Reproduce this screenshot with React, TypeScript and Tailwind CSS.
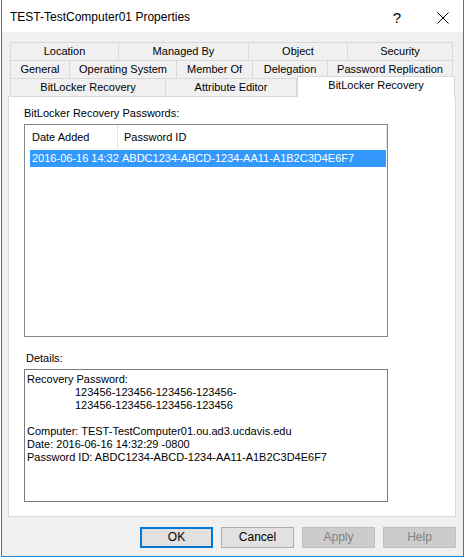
const tabRows: { label: string; w: string }[][] = [
  [
    { label: 'Location', w: 'w-[109px]' },
    { label: 'Managed By', w: 'w-[130px]' },
    { label: 'Object', w: 'w-[99px]' },
    { label: 'Security', w: 'w-[105px]' },
  ],
  [
    { label: 'General', w: 'w-[60px]' },
    { label: 'Operating System', w: 'w-[107px]' },
    { label: 'Member Of', w: 'w-[76px]' },
    { label: 'Delegation', w: 'w-[75px]' },
    { label: 'Password Replication', w: 'w-[125px]' },
  ],
];

function Tab({ label, w, first }: { label: string; w: string; first?: boolean }) {
  return (
    <div
      className={`${w} h-[18px] shrink-0 flex items-center justify-center border-t border-r border-[#d9d9d9] bg-[#f0f0f0] ${
        first ? 'border-l' : ''
      }`}
    >
      {label}
    </div>
  );
}

function Button({ label, kind }: { label: string; kind: 'default' | 'normal' | 'disabled' }) {
  const styles = {
    default: 'border-2 border-[#0078d7] bg-[#e1e1e1] text-black',
    normal: 'border border-[#adadad] bg-[#e1e1e1] text-black',
    disabled: 'border border-[#bfbfbf] bg-[#cccccc] text-[#838383]',
  }[kind];
  return (
    <div className={`w-[73px] h-[21px] flex items-center justify-center text-[12px] ${styles}`}>
      {label}
    </div>
  );
}

export default function App() {
  return (
    <div
      className="w-[465px] h-[558px] bg-white text-[11px] text-black leading-[13px]"
      style={{ fontFamily: '"Liberation Sans", Arial, sans-serif' }}
    >
      <div className="ml-[1px] w-[463px] h-[557px] border-l border-r border-b border-[#1883d7] flex flex-col">
        {/* title bar */}
        <div className="h-[32px] shrink-0 bg-white flex items-center pl-[8px] pt-[3px]">
          <span className="text-[12px] flex-1">TEST-TestComputer01 Properties</span>
          <span className="text-[15px] w-[12px] mr-[34px] text-center">?</span>
          <svg width="12" height="12" viewBox="0 0 12 12" className="mr-[14px]">
            <path d="M0.5 0.5 L11.5 11.5 M11.5 0.5 L0.5 11.5" stroke="#000" strokeWidth="1" />
          </svg>
        </div>

        {/* body */}
        <div className="flex-1 bg-[#f0f0f0] flex flex-col pt-[10px]">
          <div className="ml-[8px] flex flex-col">
            {tabRows.map((row, ri) => (
              <div key={ri} className="flex">
                {row.map((t, i) => (
                  <Tab key={t.label} label={t.label} w={t.w} first={i === 0} />
                ))}
              </div>
            ))}
            <div className="flex items-start h-[18px]">
              <Tab label="BitLocker Recovery" w="w-[156px]" first />
              <Tab label="Attribute Editor" w="w-[131px]" />
              <div className="relative z-10 -mt-[2px] w-[158px] h-[21px] shrink-0 bg-white border-t border-l border-r border-[#d9d9d9] flex justify-center pt-[2px]">
                BitLocker Recovery
              </div>
            </div>
          </div>

          {/* panel */}
          <div className="ml-[6px] w-[448px] h-[421px] bg-white border border-[#d9d9d9] flex flex-col pl-[15px]">
            <div className="mt-[10px]">BitLocker Recovery Passwords:</div>
            <div className="mt-[4px] w-[364px] h-[213px] border border-[#828790] flex flex-col">
              <div className="h-[24px] flex">
                <div className="w-[93px] pl-[7px] flex items-center border-r border-[#e5e5e5]">Date Added</div>
                <div className="w-[269px] pl-[6px] flex items-center border-r border-[#e5e5e5]">Password ID</div>
              </div>
              <div className="ml-[5px] mt-[1px] w-[356px] h-[17px] bg-[#3399ff] text-white flex items-center">
                <span className="w-[92px] pl-[2px]">2016-06-16 14:32</span>
                <span>ABDC1234-ABCD-1234-AA11-A1B2C3D4E6F7</span>
              </div>
            </div>

            <div className="mt-[15px] pl-[2px]">Details:</div>
            <div className="mt-[4px] w-[364px] h-[133px] border border-[#7a7a7a] pl-[2px] pt-[3px] flex flex-col">
              <div>Recovery Password:</div>
              <div className="pl-[48px]">123456-123456-123456-123456-</div>
              <div className="pl-[48px]">123456-123456-123456-123456</div>
              <div className="h-[13px]" />
              <div>Computer: TEST-TestComputer01.ou.ad3.ucdavis.edu</div>
              <div>Date: 2016-06-16 14:32:29 -0800</div>
              <div>Password ID: ABDC1234-ABCD-1234-AA11-A1B2C3D4E6F7</div>
            </div>
          </div>

          {/* buttons */}
          <div className="mt-[10px] flex justify-end gap-[8px] pr-[7px]">
            <Button label="OK" kind="default" />
            <Button label="Cancel" kind="normal" />
            <Button label="Apply" kind="disabled" />
            <Button label="Help" kind="disabled" />
          </div>
        </div>
      </div>
    </div>
  );
}
